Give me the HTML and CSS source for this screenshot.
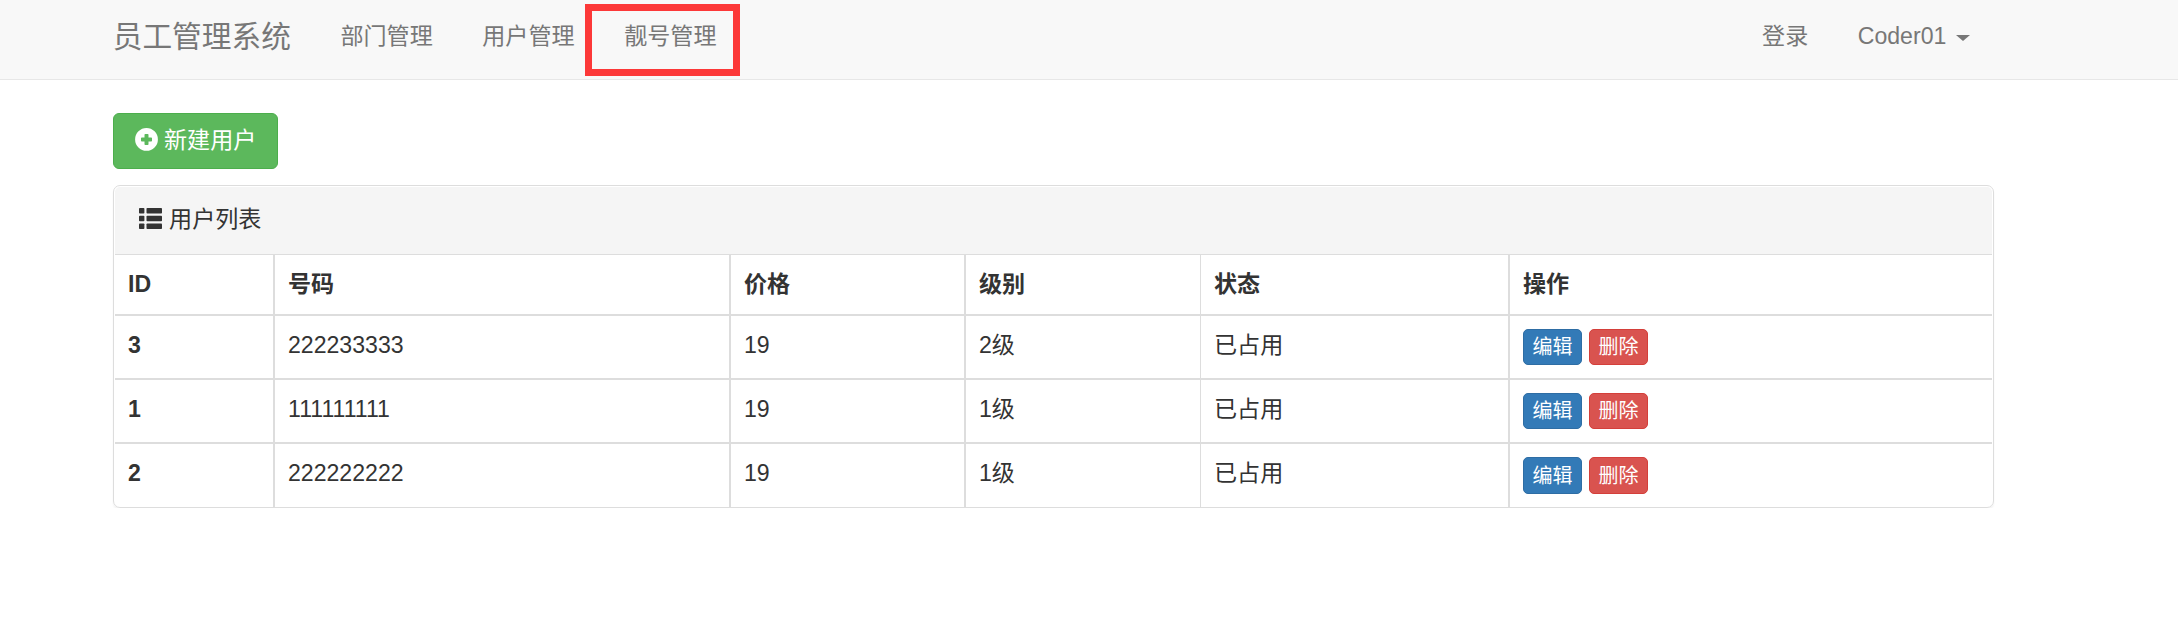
FILE: index.html
```html
<!DOCTYPE html>
<html lang="zh-CN">
<head>
<meta charset="utf-8">
<title>员工管理系统</title>
<link rel="stylesheet" href="styles.css">
</head>
<body>
<nav class="navbar">
  <div class="navbar-inner">
    <a class="brand">员工管理系统</a>
    <a class="nav-link">部门管理</a>
    <a class="nav-link">用户管理</a>
    <a class="nav-link marked">靓号管理</a>
    <a class="nav-link nav-right">登录</a>
    <a class="nav-link">Coder01 <span class="caret"></span></a>
  </div>
</nav>
<main class="container">
  <a class="btn-new"><svg class="icon" viewBox="0 0 23 23"><path fill="#fff" fill-rule="evenodd" d="M11.5 0a11.4 11.4 0 1 0 0 22.8a11.4 11.4 0 1 0 0-22.8zM10.3 6h2.4q.8 0 .8.8v2.7h2.7q.8 0 .8.8v2.4q0 .8-.8.8h-2.7v2.7q0 .8-.8.8h-2.4q-.8 0-.8-.8v-2.7H6.8q-.8 0-.8-.8v-2.4q0-.8.8-.8h2.700V6.800q0-.8.8-.8z"/></svg><span>新建用户</span></a>
  <section class="panel">
    <div class="panel-heading"><svg class="icon" viewBox="0 0 23 23"><g fill="#333"><rect x="0" y="1" width="5.400" height="5.600" rx=".8"/><rect x="7.500" y="1" width="15.500" height="5.600" rx=".8"/><rect x="0" y="8.700" width="5.400" height="5.600" rx=".8"/><rect x="7.500" y="8.700" width="15.500" height="5.600" rx=".8"/><rect x="0" y="16.400" width="5.400" height="5.600" rx=".8"/><rect x="7.500" y="16.400" width="15.500" height="5.600" rx=".8"/></g></svg><span>用户列表</span></div>
    <table class="table">
      <colgroup><col class="c-id"><col class="c-num"><col class="c-price"><col class="c-level"><col class="c-state"><col class="c-action"></colgroup>
      <thead>
        <tr><th>ID</th><th>号码</th><th>价格</th><th>级别</th><th>状态</th><th>操作</th></tr>
      </thead>
      <tbody>
        <tr><th>3</th><td>222233333</td><td>19</td><td>2级</td><td>已占用</td><td><div class="actions"><a class="btn-xs edit">编辑</a><a class="btn-xs delete">删除</a></div></td></tr>
        <tr><th>1</th><td>111111111</td><td>19</td><td>1级</td><td>已占用</td><td><div class="actions"><a class="btn-xs edit">编辑</a><a class="btn-xs delete">删除</a></div></td></tr>
        <tr><th>2</th><td>222222222</td><td>19</td><td>1级</td><td>已占用</td><td><div class="actions"><a class="btn-xs edit">编辑</a><a class="btn-xs delete">删除</a></div></td></tr>
      </tbody>
    </table>
  </section>
</main>
</body>
</html>
```

FILE: styles.css
```css
*, *::before, *::after { box-sizing: border-box; }
body {
  margin: 0;
  background: #fff;
  color: #333;
  font: 23.1px/33px "Liberation Sans", "Noto Sans CJK SC", sans-serif;
}
.navbar {
  height: 80px;
  background: #f8f8f8;
  border-bottom: 1px solid #e7e7e7;
  color: #777;
}
.navbar-inner {
  display: flex;
  width: 1906.5px;
  margin-left: 88px;
}
.brand {
  padding: 20px 24.75px;
  font-size: 29.7px;
}
.nav-link {
  position: relative;
  padding: 20px 24.75px;
  white-space: nowrap;
}
.nav-right { margin-left: auto; }
.marked::after {
  content: "";
  position: absolute;
  left: -14px;
  top: 4px;
  width: 155px;
  height: 72px;
  border: 7px solid #fc3838;
}
.caret {
  display: inline-block;
  margin-left: 3px;
  vertical-align: middle;
  border-top: 6.6px solid #777;
  border-left: 7px solid transparent;
  border-right: 7px solid transparent;
}
.container {
  width: 1881px;
  margin: 33px 0 0 113px;
}
.icon {
  width: 23px;
  height: 23px;
  flex: none;
}
.btn-new {
  display: flex;
  align-items: center;
  gap: 6.5px;
  width: 165px;
  height: 56px;
  padding: 0 0 2px 20.5px;
  border: 1px solid #4cae4c;
  border-radius: 6px;
  background: #5cb85c;
  color: #fff;
}
.btn-new .icon { margin-bottom: 2px; }
.panel {
  height: 323px;
  margin-top: 16px;
  padding: 1px;
  border: 1px solid #ddd;
  border-radius: 7px;
  box-shadow: 0 2px 2px rgba(0, 0, 0, .05);
}
.panel-heading {
  display: flex;
  align-items: center;
  gap: 6.8px;
  height: 68px;
  padding: 0 0 2px 24.3px;
  border-bottom: 1px solid #ddd;
  border-radius: 5px 5px 0 0;
  background: #f5f5f5;
}
.panel-heading .icon { margin-bottom: 2px; }
.table {
  width: 1877px;
  table-layout: fixed;
  border-collapse: separate;
  border-spacing: 0;
}
.c-id { width: 160px; }
.c-num { width: 456px; }
.c-price { width: 235px; }
.c-level { width: 235px; }
.c-state { width: 309px; }
.c-action { width: 482px; }
.table th, .table td {
  height: 64px;
  padding: 13px 13px 0;
  border: solid #ddd;
  border-width: 0 2px 2px 0;
  text-align: left;
  vertical-align: top;
}
.table thead th { height: 61px; }
.table tr > :nth-child(4) { border-right-width: 1px; }
.table tr > :last-child { border-right: 0; }
.table tbody tr:last-child > * { height: 63px; border-bottom: 0; }
.actions { display: flex; gap: 7px; }
.btn-xs {
  display: block;
  width: 59px;
  height: 36px;
  border: 1px solid;
  border-radius: 5px;
  color: #fff;
  font-size: 20px;
  line-height: 34px;
  text-align: center;
}
.edit { background: #337ab7; border-color: #2e6da4; }
.delete { background: #d9534f; border-color: #d43f3a; }
tr:last-child .btn-xs { height: 37px; line-height: 36px; }
```
